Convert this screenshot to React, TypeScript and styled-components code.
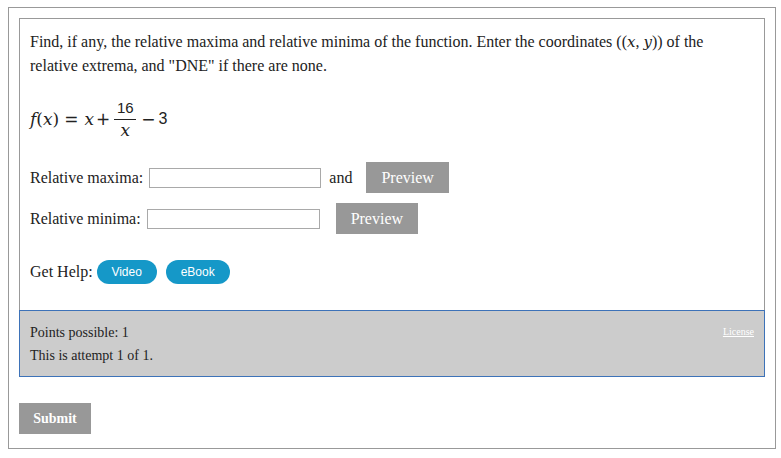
import React from "react";
import styled, { createGlobalStyle } from "styled-components";

const Global = createGlobalStyle`
  html, body { margin: 0; padding: 0; background: #fff; }
  body { font-family: "Liberation Serif", "Times New Roman", serif; color: #222; }
`;

const Outer = styled.div`
  box-sizing: border-box;
  margin: 7px 0 0 8px;
  width: 768px;
  height: 442px;
  border: 1px solid #999;
  padding: 10px;
`;

const Panel = styled.div`
  border: 1px solid #999;
  border-bottom: none;
  padding: 11px 10px 26px;
`;

const Para = styled.p`
  margin: 0;
  font-size: 16px;
  line-height: 23px;
`;

const MathVar = styled.span`
  font-family: "DejaVu Serif", serif;
  font-style: italic;
  font-size: 15px;
`;

const MathBlock = styled.div`
  display: flex;
  align-items: center;
  margin: 19px 0 0;
  height: 46px;
  font-family: "DejaVu Serif", serif;
  font-size: 17px;
`;

const MathVarL = styled.span`
  font-style: italic;
`;

const MathParen = styled.span`
  font-size: 17px;
`;

const MathNum = styled.span`
  font-family: "Liberation Sans", Arial, sans-serif;
  font-size: 16px;
`;

const MathOp = styled.span<{ $l: number; $r: number }>`
  font-family: "DejaVu Sans", sans-serif;
  font-size: 17px;
  margin: 0 ${(p) => p.$r}px 0 ${(p) => p.$l}px;
`;

const Frac = styled.span`
  display: inline-flex;
  flex-direction: column;
  align-items: center;
  margin: 0 5px 0 4px;
  width: 22px;
`;

const Num = styled.span`
  font-family: "Liberation Sans", Arial, sans-serif;
  font-size: 15px;
  line-height: 17px;
  width: 100%;
  text-align: center;
  padding-bottom: 3px;
  border-bottom: 1px solid #222;
`;

const Den = styled.span`
  line-height: 20px;
  font-style: italic;
`;

const Row = styled.div<{ $top: number }>`
  display: flex;
  align-items: center;
  margin-top: ${(p) => p.$top}px;
  font-size: 16px;
  height: 31px;
`;

const Label = styled.span`
  margin-right: 6px;
`;

const TextInput = styled.input<{ $w: number }>`
  box-sizing: border-box;
  width: ${(p) => p.$w}px;
  height: 20px;
  border: 1px solid #a9a9a9;
  padding: 1px 2px;
  font-size: 14px;
`;

const And = styled.span`
  margin-left: 8px;
`;

const GrayButton = styled.button<{ $ml: number }>`
  margin-left: ${(p) => p.$ml}px;
  height: 31px;
  padding: 0 15px;
  border: none;
  background: #989898;
  color: #fff;
  font-family: "Liberation Serif", "Times New Roman", serif;
  font-size: 16px;
`;

const HelpRow = styled.div`
  display: flex;
  align-items: center;
  margin-top: 26px;
  font-size: 16px;
  height: 24px;
`;

const Pill = styled.button<{ $w: number; $ml: number }>`
  width: ${(p) => p.$w}px;
  height: 24px;
  margin-left: ${(p) => p.$ml}px;
  border: none;
  border-radius: 12px;
  background: #1598c8;
  color: #fff;
  font-family: "Liberation Sans", Arial, sans-serif;
  font-size: 12px;
  padding: 0;
`;

const Footer = styled.div`
  position: relative;
  background: #cccccc;
  border: 1px solid #3d72b8;
  height: 65px;
  padding: 0 10px;
  font-size: 14px;
`;

const FootLine = styled.div<{ $top: number }>`
  padding-top: ${(p) => p.$top}px;
  line-height: 17px;
`;

const License = styled.a`
  position: absolute;
  right: 10px;
  top: 15px;
  font-size: 10px;
  color: #fff;
  text-decoration: underline;
`;

const Submit = styled.button`
  margin-top: 26px;
  width: 72px;
  height: 31px;
  border: none;
  background: #989898;
  color: #fff;
  font-family: "Liberation Serif", "Times New Roman", serif;
  font-size: 14px;
  font-weight: bold;
  padding: 0;
`;

export default function App() {
  return (
    <>
      <Global />
      <Outer>
        <Panel>
          <Para>
            Find, if any, the relative maxima and relative minima of the function. Enter the coordinates ((
            <MathVar>x</MathVar>, <MathVar>y</MathVar>)) of the relative extrema, and "DNE" if there are none.
          </Para>
          <MathBlock>
            <MathVarL>f</MathVarL>
            <MathParen>(</MathParen>
            <MathVarL>x</MathVarL>
            <MathParen>)</MathParen>
            <MathOp $l={5} $r={6}>=</MathOp>
            <MathVarL>x</MathVarL>
            <MathOp $l={2} $r={0}>+</MathOp>
            <Frac>
              <Num>16</Num>
              <Den>x</Den>
            </Frac>
            <MathOp $l={0} $r={3}>−</MathOp>
            <MathNum>3</MathNum>
          </MathBlock>
          <Row $top={20}>
            <Label>Relative maxima:</Label>
            <TextInput $w={172} />
            <And>and</And>
            <GrayButton $ml={14}>Preview</GrayButton>
          </Row>
          <Row $top={10}>
            <Label>Relative minima:</Label>
            <TextInput $w={173} />
            <GrayButton $ml={16}>Preview</GrayButton>
          </Row>
          <HelpRow>
            <span>Get Help:</span>
            <Pill $w={60} $ml={4}>Video</Pill>
            <Pill $w={64} $ml={9}>eBook</Pill>
          </HelpRow>
        </Panel>
        <Footer>
          <FootLine $top={13}>Points possible: 1</FootLine>
          <FootLine $top={6}>This is attempt 1 of 1.</FootLine>
          <License href="#">License</License>
        </Footer>
        <Submit>Submit</Submit>
      </Outer>
    </>
  );
}
